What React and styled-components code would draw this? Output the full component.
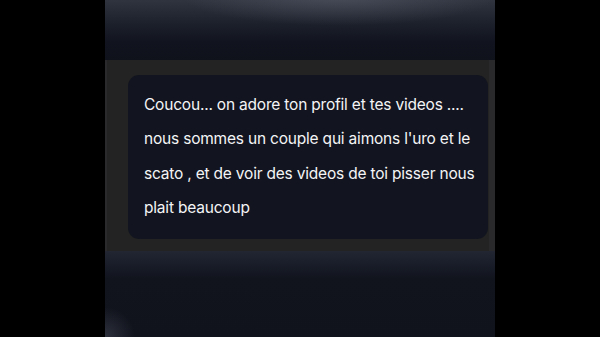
import React from 'react';
import styled, { createGlobalStyle } from 'styled-components';

const GlobalStyle = createGlobalStyle`
  html, body {
    margin: 0;
    padding: 0;
    background: #000;
    width: 600px;
    height: 337px;
    overflow: hidden;
  }
`;

const Frame = styled.div`
  width: 600px;
  height: 337px;
  display: flex;
  justify-content: center;
  background: #000;
`;

const Screen = styled.div`
  width: 390px;
  height: 337px;
  display: flex;
  flex-direction: column;
  background: #10131c;
`;

const TopBar = styled.div`
  height: 60px;
  flex-shrink: 0;
  background:
    radial-gradient(ellipse 50% 60% at 60% -5%, rgba(100,104,118,0.45), rgba(100,104,118,0) 80%),
    linear-gradient(180deg, #30343f 0%, #1c202b 40%, #11141e 70%, #0f121b 100%);
`;

const Thread = styled.div`
  height: 191px;
  flex-shrink: 0;
  box-sizing: border-box;
  padding: 15px 7px 0 21px;
  background: #232323;
  border-left: 2px solid #2a2a2c;
  border-right: 6px solid #29292b;
`;

const Bubble = styled.div`
  box-sizing: border-box;
  width: 360px;
  height: 164px;
  padding: 13px 10px 0 16px;
  background: #12151f;
  border-radius: 11px;
`;

const Message = styled.p`
  margin: 0;
  font-family: Inter, "Open Sans", sans-serif;
  font-size: 15.5px;
  line-height: 34.3px;
  letter-spacing: -0.2px;
  color: #f4f4f6;
`;

const Footer = styled.div`
  flex: 1;
  background:
    radial-gradient(circle at 0% 100%, rgba(70,74,86,0.55), rgba(70,74,86,0) 30px),
    linear-gradient(180deg, #222633 0%, #1a1e2a 14%, #11141d 32%, #10131c 100%);
`;

export default function App() {
  return (
    <>
      <GlobalStyle />
      <Frame>
        <Screen>
          <TopBar />
          <Thread>
            <Bubble>
              <Message>
                Coucou... on adore ton profil et tes videos ....
                nous sommes un couple qui aimons l'uro et le
                scato , et de voir des videos de toi pisser nous
                plait beaucoup
              </Message>
            </Bubble>
          </Thread>
          <Footer />
        </Screen>
      </Frame>
    </>
  );
}
